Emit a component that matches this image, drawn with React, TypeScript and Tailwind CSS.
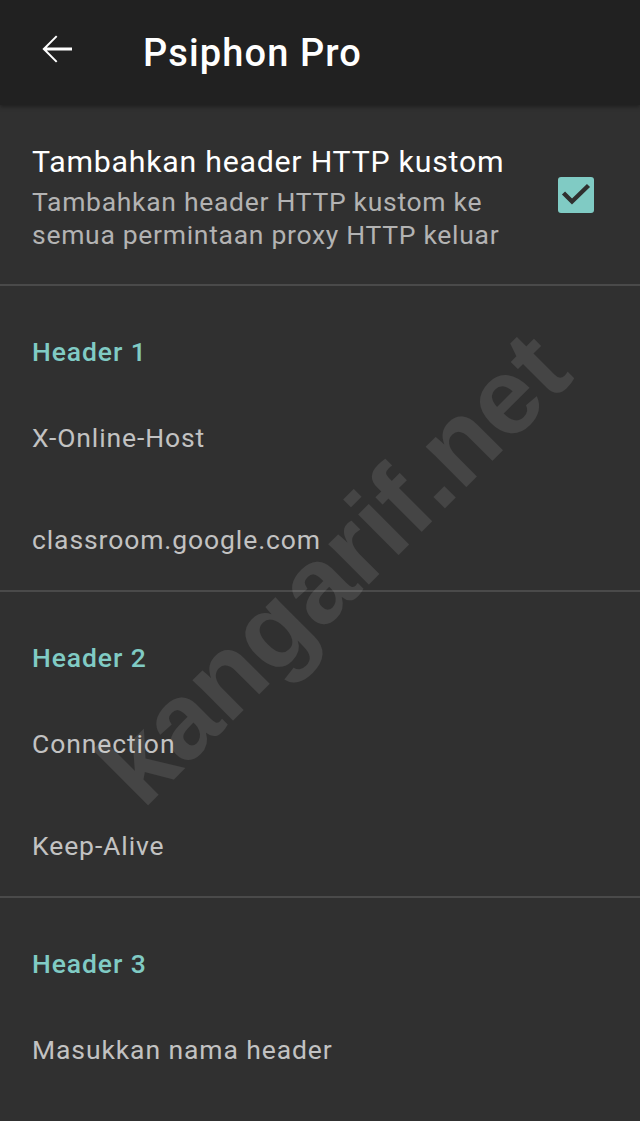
import React from "react";

type HeaderEntry = {
  label: string;
  name: string;
  value?: string;
};

const headers: HeaderEntry[] = [
  { label: "Header 1", name: "X-Online-Host", value: "classroom.google.com" },
  { label: "Header 2", name: "Connection", value: "Keep-Alive" },
  { label: "Header 3", name: "Masukkan nama header" },
];

function BackArrow() {
  return (
    <svg width="48" height="48" viewBox="0 0 24 24" className="mt-[25px] shrink-0" fill="#ffffff">
      <path d="M20 11.2H7.4l5.3-5.3L12 5.2 5.2 12l6.8 6.8.7-.7-5.3-5.3H20z" />
    </svg>
  );
}

function CheckBox() {
  return (
    <div className="mt-[33px] w-[36px] h-[36px] rounded-[3px] bg-[#80cbc4] shrink-0">
      <svg width="36" height="36" viewBox="0 0 36 36">
        <polyline
          points="5.5,16 14,24.5 30.5,8.5"
          fill="none"
          stroke="#2f2f2f"
          strokeWidth="4.4"
          strokeLinecap="butt"
          strokeLinejoin="miter"
        />
      </svg>
    </div>
  );
}

function HeaderSection({ entry }: { entry: HeaderEntry }) {
  return (
    <div className="border-t-2 border-[#4a4a4a] pl-[32px] pt-[51px] pb-[35px]">
      <div className="text-[26.5px] leading-[30px] tracking-[0.9px] font-medium text-[#80cbc4]">
        {entry.label}
      </div>
      <div className="mt-[56px] text-[26.5px] leading-[30px] tracking-[0.9px] text-[#c2c2c2]">
        {entry.name}
      </div>
      {entry.value && (
        <div className="mt-[72px] text-[26.5px] leading-[30px] tracking-[0.9px] text-[#c2c2c2]">
          {entry.value}
        </div>
      )}
    </div>
  );
}

export default function App() {
  return (
    <div className="relative w-[640px] h-[1121px] overflow-hidden bg-[#303030] font-['Roboto',sans-serif]">
      {/* toolbar */}
      <div className="relative z-10 h-[105px] bg-[#212121] flex items-start pl-[32px] shadow-[0_2px_4px_rgba(0,0,0,0.35)]">
        <BackArrow />
        <div className="ml-[63px] mt-[31px] text-[38px] leading-[44px] tracking-[1.1px] font-medium text-white">
          Psiphon Pro
        </div>
      </div>

      {/* custom header toggle */}
      <div className="flex items-start justify-between pl-[32px] pr-[46px] pt-[39px] pb-[33px]">
        <div className="w-[505px]">
          <div className="text-[30.3px] leading-[36px] tracking-[0.75px] text-white">
            Tambahkan header HTTP kustom
          </div>
          <div className="mt-[5px] text-[26.5px] leading-[33px] tracking-[0.7px] text-[#b3b3b3]">
            Tambahkan header HTTP kustom ke semua permintaan proxy HTTP keluar
          </div>
        </div>
        <CheckBox />
      </div>

      {headers.map((h) => (
        <HeaderSection key={h.label} entry={h} />
      ))}

      {/* watermark */}
      <div className="pointer-events-none absolute left-[333px] top-[568px] -translate-x-1/2 -translate-y-1/2 -rotate-45 whitespace-nowrap font-['Liberation_Sans',Arial,sans-serif] font-bold text-[108px] leading-none text-white/10">
        kangarif.net
      </div>
    </div>
  );
}
